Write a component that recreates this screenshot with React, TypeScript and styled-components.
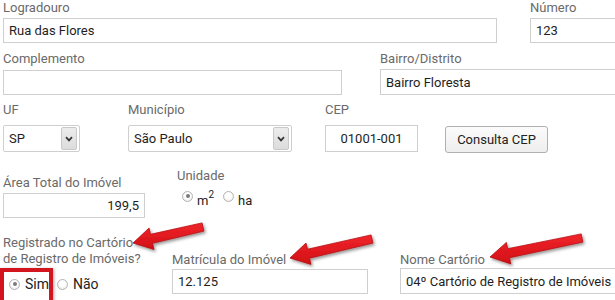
import React from "react";
import styled, { createGlobalStyle } from "styled-components";

const Global = createGlobalStyle`
  html, body { margin: 0; padding: 0; background: #fff; overflow: hidden; }
  body { font-family: Roboto, "Liberation Sans", Arial, sans-serif; }
  * { box-sizing: border-box; }
`;

const Page = styled.div`
  position: relative;
  width: 615px;
  height: 300px;
  padding-left: 3px;
  overflow: hidden;
`;

const Row = styled.div<{ $top: number }>`
  display: flex;
  align-items: flex-start;
  margin-top: ${(p) => p.$top}px;
`;

const Field = styled.div<{ $w: number; $ml?: number; $pt?: number; $mt?: number }>`
  display: flex;
  flex-direction: column;
  flex: none;
  width: ${(p) => p.$w}px;
  margin-left: ${(p) => p.$ml ?? 0}px;
  margin-top: ${(p) => p.$mt ?? 0}px;
  padding-top: ${(p) => p.$pt ?? 0}px;
`;

const Label = styled.div<{ $mb?: number }>`
  font-size: 13px;
  line-height: 16px;
  color: #6a6a6a;
  white-space: nowrap;
  margin-bottom: ${(p) => p.$mb ?? 2}px;
`;

const Input = styled.div<{ $align?: string; $h?: number }>`
  height: ${(p) => p.$h ?? 25}px;
  border: 1px solid #cfcfcf;
  background: #fff;
  padding: 0 5px;
  font-size: 13px;
  color: #1e1e1e;
  display: flex;
  align-items: center;
  justify-content: ${(p) => p.$align ?? "flex-start"};
  white-space: nowrap;
  overflow: hidden;
`;

const Select = styled.div`
  height: 27px;
  border: 1px solid #cfcfcf;
  border-radius: 2px;
  background: #fff;
  display: flex;
  align-items: center;
  padding: 0 2px 0 5px;
  font-size: 13px;
  color: #1e1e1e;
`;

const SelectText = styled.span`
  flex: 1;
`;

const SelectArrow = styled.div`
  width: 16px;
  height: 23px;
  border: 1px solid #c8c8c8;
  border-radius: 2px;
  background: linear-gradient(#ececec, #dcdcdc);
  display: flex;
  align-items: center;
  justify-content: center;
`;

const Button = styled.div`
  flex: none;
  width: 103px;
  height: 27px;
  margin-left: 27px;
  margin-top: 24px;
  border: 1px solid #b0b0b0;
  border-radius: 3px;
  background: linear-gradient(#fbfbfb, #eeeeee);
  font-size: 13px;
  color: #222;
  display: flex;
  align-items: center;
  justify-content: center;
`;

const RadioRow = styled.div<{ $mt?: number }>`
  display: flex;
  align-items: center;
  margin-top: ${(p) => p.$mt ?? 0}px;
  height: 18px;
`;

const Radio = styled.span<{ $checked?: boolean; $ml?: number }>`
  flex: none;
  width: 11px;
  height: 11px;
  border-radius: 50%;
  border: 1px solid #b3b3b3;
  background: radial-gradient(circle at 50% 40%, #ffffff 40%, #e4e4e4 100%);
  margin-left: ${(p) => p.$ml ?? 0}px;
  display: flex;
  align-items: center;
  justify-content: center;
  &::after {
    content: "";
    width: 4px;
    height: 4px;
    border-radius: 50%;
    background: ${(p) => (p.$checked ? "#7a7a7a" : "transparent")};
  }
`;

const RadioText = styled.span<{ $ml?: number; $size?: number; $dy?: number }>`
  font-size: ${(p) => p.$size ?? 13}px;
  color: #222;
  margin-left: ${(p) => p.$ml ?? 5}px;
  position: relative;
  top: ${(p) => p.$dy ?? 0}px;
`;

const Sup = styled.sup`
  font-size: 10px;
  position: relative;
  top: -2px;
`;

const Highlight = styled.div`
  margin-left: -3px;
  margin-top: 1px;
  width: 53px;
  height: 38px;
  border: 4px solid #d3161d;
  border-bottom-width: 0;
  box-shadow: 1px 1px 3px rgba(0, 0, 0, 0.35);
  display: flex;
  align-items: flex-start;
  padding: 3px 0 0 4px;
  overflow: visible;
  white-space: nowrap;
`;

const Overlay = styled.svg`
  position: absolute;
  left: 0;
  top: 0;
  width: 615px;
  height: 300px;
  pointer-events: none;
`;

function arrowPoints(tip: [number, number], tail: [number, number]) {
  const dx = tail[0] - tip[0];
  const dy = tail[1] - tip[1];
  const len = Math.hypot(dx, dy);
  const ux = dx / len;
  const uy = dy / len;
  const nx = -uy;
  const ny = ux;
  const L = 19;
  const W = 11;
  const w = 4.6;
  const wt = 4.2;
  const bx = tip[0] + ux * L;
  const by = tip[1] + uy * L;
  const pts: [number, number][] = [
    tip,
    [bx + nx * W, by + ny * W],
    [bx + nx * w, by + ny * w],
    [tail[0] + nx * wt, tail[1] + ny * wt],
    [tail[0] - nx * wt, tail[1] - ny * wt],
    [bx - nx * w, by - ny * w],
    [bx - nx * W, by - ny * W],
  ];
  return pts.map((p) => `${p[0].toFixed(1)},${p[1].toFixed(1)}`).join(" ");
}

const Arrow: React.FC<{ tip: [number, number]; tail: [number, number] }> = ({ tip, tail }) => (
  <polygon
    points={arrowPoints(tip, tail)}
    fill="url(#redGrad)"
    stroke="#b50d12"
    strokeWidth={0.8}
    strokeLinejoin="round"
    filter="url(#shadow)"
  />
);

const Chevron = () => (
  <svg width="8" height="6" viewBox="0 0 8 6">
    <path d="M1 1.2 L4 4.4 L7 1.2" fill="none" stroke="#333" strokeWidth="1.7" />
  </svg>
);

export default function App() {
  return (
    <>
      <Global />
      <Page>
        <Row $top={0}>
          <Field $w={494}>
            <Label>Logradouro</Label>
            <Input>Rua das Flores</Input>
          </Field>
          <Field $w={100} $ml={33}>
            <Label>Número</Label>
            <Input>123</Input>
          </Field>
        </Row>
        <Row $top={8}>
          <Field $w={339}>
            <Label $mb={3}>Complemento</Label>
            <Input />
          </Field>
          <Field $w={250} $ml={38}>
            <Label>Bairro/Distrito</Label>
            <Input $h={26}>Bairro Floresta</Input>
          </Field>
        </Row>
        <Row $top={7}>
          <Field $w={77}>
            <Label $mb={7}>UF</Label>
            <Select>
              <SelectText>SP</SelectText>
              <SelectArrow>
                <Chevron />
              </SelectArrow>
            </Select>
          </Field>
          <Field $w={164} $ml={48}>
            <Label $mb={7}>Município</Label>
            <Select>
              <SelectText>São Paulo</SelectText>
              <SelectArrow>
                <Chevron />
              </SelectArrow>
            </Select>
          </Field>
          <Field $w={93} $ml={33}>
            <Label $mb={7}>CEP</Label>
            <Input $h={27} $align="center">01001-001</Input>
          </Field>
          <Button>Consulta CEP</Button>
        </Row>
        <Row $top={18}>
          <Field $w={142} $pt={4}>
            <Label $mb={2}>Área Total do Imóvel</Label>
            <Input $align="flex-end">199,5</Input>
          </Field>
          <Field $w={120} $ml={32} $mt={-3}>
            <Label>Unidade</Label>
            <RadioRow $mt={1}>
              <Radio $checked $ml={5} />
              <RadioText $ml={4} $dy={4}>
                m<Sup>2</Sup>
              </RadioText>
              <Radio $ml={9} />
              <RadioText $ml={4} $dy={4}>
                ha
              </RadioText>
            </RadioRow>
          </Field>
        </Row>
        <Row $top={17}>
          <Field $w={169}>
            <Label $mb={0}>
              Registrado no Cartório
              <br />
              de Registro de Imóveis?
            </Label>
            <Highlight>
              <RadioRow>
                <Radio $checked $ml={1} />
                <RadioText $ml={5} $size={14}>
                  Sim
                </RadioText>
                <Radio $ml={8} />
                <RadioText $ml={5} $size={14}>
                  Não
                </RadioText>
              </RadioRow>
            </Highlight>
          </Field>
          <Field $w={196} $pt={17}>
            <Label $mb={1}>Matrícula do Imóvel</Label>
            <Input>12.125</Input>
          </Field>
          <Field $w={230} $ml={32} $pt={17}>
            <Label $mb={0}>Nome Cartório</Label>
            <Input $h={26}>04º Cartório de Registro de Imóveis</Input>
          </Field>
        </Row>
        <Overlay viewBox="0 0 615 300">
          <defs>
            <linearGradient id="redGrad" x1="0" y1="0" x2="0" y2="1">
              <stop offset="0" stopColor="#f0262b" />
              <stop offset="1" stopColor="#d10f15" />
            </linearGradient>
            <filter id="shadow" x="-20%" y="-50%" width="140%" height="200%">
              <feDropShadow dx="1.5" dy="2" stdDeviation="1.5" floodColor="#000" floodOpacity="0.4" />
            </filter>
          </defs>
          <Arrow tip={[133, 243]} tail={[203, 227]} />
          <Arrow tip={[290, 258]} tail={[372, 239]} />
          <Arrow tip={[490, 257]} tail={[582, 238]} />
        </Overlay>
      </Page>
    </>
  );
}
